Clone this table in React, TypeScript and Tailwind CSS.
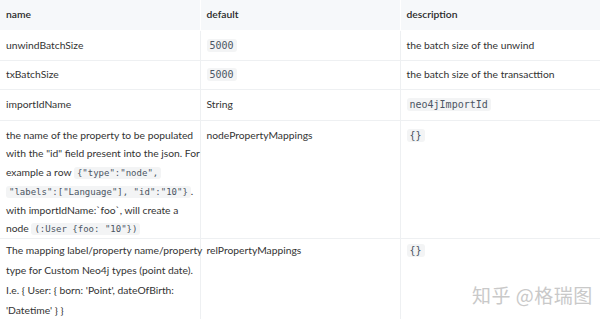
import React from 'react';

const font = { fontFamily: 'Lato, "Noto Sans", sans-serif' };

const Code: React.FC<{ children: React.ReactNode; small?: boolean }> = ({ children, small }) => (
  <code
    className={`rounded-[3px] bg-[#f3f4f5] px-[3px] py-[1px] font-['DejaVu_Sans_Mono',monospace] leading-none text-[#4b5563] ${
      small ? 'text-[9px]' : 'text-[10px]'
    }`}
  >
    {children}
  </code>
);

const cell = 'border-b border-r border-[#eef0f2] px-[6px] align-top whitespace-nowrap last:border-r-0';

export default function App() {
  return (
    <div className="relative h-[319px] w-[600px] overflow-hidden bg-white text-[10.3px] leading-[19px] text-[#333]" style={font}>
      <table className="w-[600px] table-fixed border-collapse">
        <colgroup>
          <col className="w-[200px]" />
          <col className="w-[200px]" />
          <col className="w-[200px]" />
        </colgroup>
        <thead>
          <tr className="h-[30px] bg-[#f6f8fa] text-[#2a2a2a]">
            <th className="border-b border-r border-white px-[6px] pt-[5px] text-left align-top font-semibold">name</th>
            <th className="border-b border-r border-white px-[6px] pt-[5px] text-left align-top font-semibold">default</th>
            <th className="border-b border-white px-[6px] pt-[5px] text-left align-top font-semibold">description</th>
          </tr>
        </thead>
        <tbody>
          <tr className="h-[30px]">
            <td className={`${cell} pt-[5px]`}>unwindBatchSize</td>
            <td className={`${cell} pt-[5px]`}><Code>5000</Code></td>
            <td className={`${cell} pt-[5px]`}>the batch size of the unwind</td>
          </tr>
          <tr className="h-[29px]">
            <td className={`${cell} pt-[4px]`}>txBatchSize</td>
            <td className={`${cell} pt-[4px]`}><Code>5000</Code></td>
            <td className={`${cell} pt-[4px]`}>the batch size of the transacttion</td>
          </tr>
          <tr className="h-[31px]">
            <td className={`${cell} pt-[5px]`}>importIdName</td>
            <td className={`${cell} pt-[5px]`}>String</td>
            <td className={`${cell} pt-[5px]`}><Code>neo4jImportId</Code></td>
          </tr>
          <tr className="h-[118px]">
            <td className={`${cell} pt-[5px] leading-[18.8px]`}>
              the name of the property to be populated
              <br />
              with the "id" field present into the json. For
              <br />
              example a row <Code small>{'{"type":"node",'}</Code>
              <br />
              <Code small>{'"labels":["Language"], "id":"10"}'}</Code>.
              <br />
              with importIdName:`foo`, will create a
              <br />
              node <Code small>{'(:User {foo: "10"})'}</Code>
            </td>
            <td className={`${cell} pt-[5px]`}>nodePropertyMappings</td>
            <td className={`${cell} pt-[5px]`}><Code>{'{}'}</Code></td>
          </tr>
          <tr className="h-[90px]">
            <td className={`${cell} pt-[1px] leading-[20px]`}>
              The mapping label/property name/property
              <br />
              type for Custom Neo4j types (point date).
              <br />
              I.e. {"{ User: { born: 'Point', dateOfBirth:"}
              <br />
              {"'Datetime' } }"}
            </td>
            <td className={`${cell} pt-[1px] leading-[20px]`}>relPropertyMappings</td>
            <td className={`${cell} pt-[1px] leading-[20px]`}><Code>{'{}'}</Code></td>
          </tr>
        </tbody>
      </table>
      <div
        className="absolute left-[472px] top-[283px] text-[19px] leading-[24px] tracking-[0.5px] text-[#c9c9c9]"
        style={{ fontFamily: '"Noto Sans CJK SC", sans-serif' }}
      >
        知乎 @格瑞图
      </div>
    </div>
  );
}
